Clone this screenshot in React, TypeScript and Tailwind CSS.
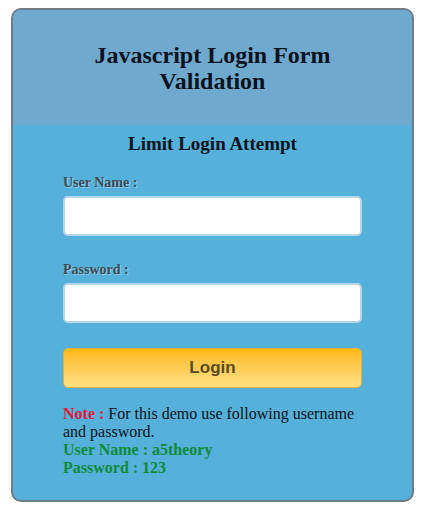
export default function App() {
	return (
		<div className="min-h-[508px] bg-white pt-[8px] pl-[11px]">
			<div className="w-[403px] h-[494px] rounded-[10px] border-2 border-[#6e7c86] overflow-hidden bg-[#55b1d9] font-['Liberation_Serif',serif] flex flex-col">
				{/* cabecera */}
				<div className="h-[115px] bg-[#6fa9cd] flex items-center justify-center">
					<h1 className="text-[24px] leading-[26px] font-bold text-[#0b1320] text-center">
						Javascript Login Form
						<br />
						Validation
					</h1>
				</div>

				<div className="px-[50px] pt-[8px]">
					<h2 className="text-[19px] leading-[22px] font-bold text-[#0b1320] text-center">
						Limit Login Attempt
					</h2>

					<label className="block mt-[19px] text-[14px] leading-[17px] font-bold text-[#3f4b55] [text-shadow:1px_1px_0_rgba(255,255,255,0.35)]">
						User Name :
					</label>
					<input
						type="text"
						className="block w-full h-[40px] mt-[5px] bg-white rounded-[5px] border-2 border-[#b9d6e6] outline-none"
					/>

					<label className="block mt-[25px] text-[14px] leading-[17px] font-bold text-[#3f4b55] [text-shadow:1px_1px_0_rgba(255,255,255,0.35)]">
						Password :
					</label>
					<input
						type="password"
						className="block w-full h-[40px] mt-[5px] bg-white rounded-[5px] border-2 border-[#b9d6e6] outline-none"
					/>

					<button
						type="button"
						className="block w-full h-[40px] mt-[25px] rounded-[5px] border border-[#e0b040] bg-gradient-to-b from-[#ffb800] to-[#ffe080] font-['Liberation_Sans',sans-serif] text-[17px] font-bold text-[#5a4a20]"
					>
						Login
					</button>

					<p className="mt-[17px] text-[16px] leading-[18px] text-[#0b1320]">
						<span className="font-bold text-[#e4163c]">Note :</span> For this demo use following username and password.
						<br />
						<span className="font-bold text-[#0f8a3c]">User Name : a5theory</span>
						<br />
						<span className="font-bold text-[#0f8a3c]">Password : 123</span>
					</p>
				</div>
			</div>
		</div>
	);
}
